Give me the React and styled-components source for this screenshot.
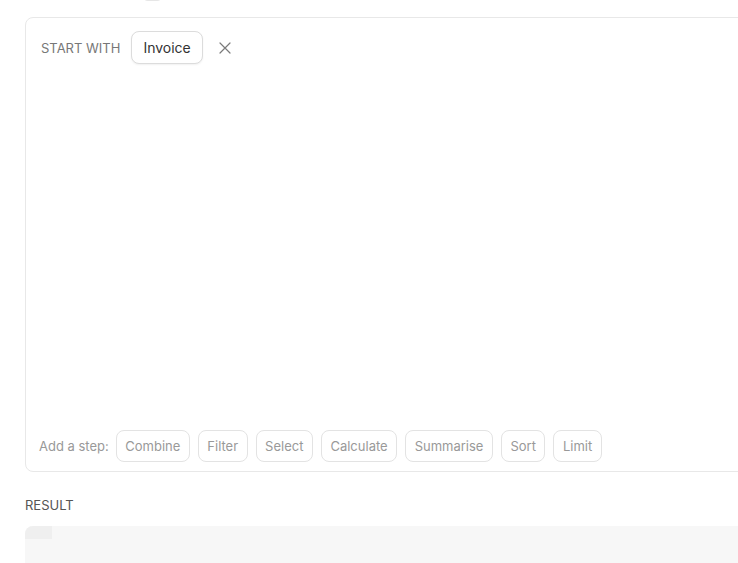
import React from "react";
import styled, { createGlobalStyle } from "styled-components";

const steps = ["Combine", "Filter", "Select", "Calculate", "Summarise", "Sort", "Limit"];

function App() {
  return (
    <>
      <GlobalStyle />
      <Page>
        <TopBar>
          <Handle />
        </TopBar>
        <EditorCard>
          <SourceRow>
            <SectionLabel>Start with</SectionLabel>
            <TableChip>Invoice</TableChip>
            <ClearButton aria-label="Remove">
              <svg width="12" height="12" viewBox="0 0 12 12" fill="none">
                <path d="M1 1L11 11M11 1L1 11" stroke="#7a7a7a" strokeWidth="1.2" strokeLinecap="round" />
              </svg>
            </ClearButton>
          </SourceRow>
          <StepRow>
            <StepLabel>Add a step:</StepLabel>
            {steps.map((s) => (
              <StepButton key={s}>{s}</StepButton>
            ))}
          </StepRow>
        </EditorCard>
        <ResultLabel>Result</ResultLabel>
        <ResultBox>
          <ResultTab />
        </ResultBox>
      </Page>
    </>
  );
}

const GlobalStyle = createGlobalStyle`
  html, body {
    margin: 0;
    padding: 0;
    background: #ffffff;
    overflow: hidden;
  }
  body {
    font-family: Inter, "Liberation Sans", sans-serif;
  }
`;

const Page = styled.div`
  width: 780px;
  height: 563px;
  padding-left: 25px;
  box-sizing: border-box;
  display: flex;
  flex-direction: column;
`;

const TopBar = styled.div`
  height: 20px;
  margin-top: -19px;
  display: flex;
  padding-left: 117px;
`;

const Handle = styled.div`
  width: 21px;
  height: 20px;
  border-radius: 6px;
  background: #e6e6e6;
`;

const EditorCard = styled.div`
  margin-top: 16px;
  height: 455px;
  box-sizing: border-box;
  border: 1px solid #e8e8e8;
  border-radius: 8px;
  display: flex;
  flex-direction: column;
  justify-content: space-between;
  padding: 13px 14px 9px 13px;
`;

const SourceRow = styled.div`
  display: flex;
  align-items: center;
  padding-left: 2px;
`;

const SectionLabel = styled.span`
  font-size: 13px;
  color: #777777;
  text-transform: uppercase;
  margin-right: 11px;
`;

const TableChip = styled.button`
  font-family: inherit;
  font-size: 14px;
  color: #333333;
  background: #ffffff;
  border: 1px solid #dcdcdc;
  border-radius: 8px;
  height: 33px;
  padding: 0 11px;
  box-shadow: 0 1px 2px rgba(0, 0, 0, 0.06);
`;

const ClearButton = styled.button`
  border: none;
  background: transparent;
  padding: 0;
  margin-left: 16px;
  width: 12px;
  height: 12px;
  display: flex;
`;

const StepRow = styled.div`
  display: flex;
  align-items: center;
  gap: 8px;
`;

const StepLabel = styled.span`
  font-size: 13px;
  color: #999999;
  margin-right: -1px;
`;

const StepButton = styled.button`
  font-family: inherit;
  font-size: 13px;
  color: #999999;
  background: #ffffff;
  border: 1px solid #e3e3e3;
  border-radius: 8px;
  height: 32px;
  padding: 0 8.5px;
`;

const ResultLabel = styled.div`
  margin-top: 25px;
  font-size: 13px;
  color: #555555;
  text-transform: uppercase;
  line-height: 16px;
`;

const ResultBox = styled.div`
  margin-top: 13px;
  flex: 1;
  background: #f7f7f7;
  border-radius: 8px 0 0 0;
  overflow: hidden;
`;

const ResultTab = styled.div`
  width: 27px;
  height: 13px;
  background: #efefef;
`;

export default App;
